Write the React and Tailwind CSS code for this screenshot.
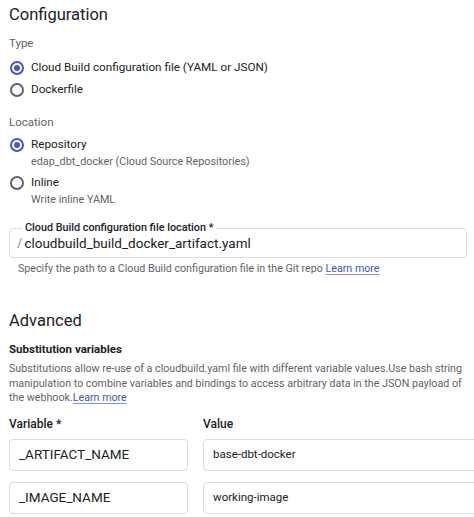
import React from 'react';

const Radio = ({ checked }) => (
  <span
    className={`flex h-[14px] w-[14px] shrink-0 items-center justify-center rounded-full border-2 ${
      checked ? 'border-[#4257d6]' : 'border-[#5f6368]'
    }`}
  >
    {checked && <span className="h-[6px] w-[6px] rounded-full bg-[#4257d6]" />}
  </span>
);

const Option = ({ checked, label, sub }) => (
  <div>
    <div className="flex h-[18px] items-center gap-[7px] pl-[1px]">
      <Radio checked={checked} />
      <span className="text-[11.7px] text-[#202124]">{label}</span>
    </div>
    {sub && <div className="h-[16px] pl-[22px] text-[10.8px] leading-[16px] text-[#5f6368]">{sub}</div>}
  </div>
);

const Box = ({ children, className = '' }) => (
  <div className={`flex h-[32px] items-center rounded-[4px] border border-[#dadce0] px-[9px] text-[#202124] ${className}`}>
    {children}
  </div>
);

const Link = ({ children }) => (
  <span className="text-[#4257c4] underline decoration-[#8a94d8] underline-offset-2">{children}</span>
);

export default function App() {
  return (
    <div className="h-[517px] w-[474px] overflow-hidden bg-white pl-[9px] font-['Roboto',sans-serif]">
      <h2 className="h-[30px] text-[16.5px] leading-[30px] text-[#202124]">Configuration</h2>

      <div className="mt-[5px] h-[16px] text-[11.5px] leading-[16px] text-[#5f6368]">Type</div>
      <div className="mt-[8px] flex flex-col gap-[4px]">
        <Option checked label="Cloud Build configuration file (YAML or JSON)" />
        <Option label="Dockerfile" />
      </div>

      <div className="mt-[15px] h-[16px] text-[11.5px] leading-[16px] text-[#5f6368]">Location</div>
      <div className="mt-[6px] flex flex-col gap-[4px]">
        <Option checked label="Repository" sub="edap_dbt_docker (Cloud Source Repositories)" />
        <Option label="Inline" sub="Write inline YAML" />
      </div>

      <div className="relative mt-[20px] flex h-[30px] w-[458px] items-center rounded-[4px] border border-[#dadce0] pl-[7px]">
        <span className="absolute left-[12px] top-[-8px] bg-white px-[3px] text-[10.8px] font-medium leading-[14px] text-[#202124]">
          Cloud Build configuration file location *
        </span>
        <span className="mr-[2px] text-[13px] text-[#80868b]">/</span>
        <span className="text-[13.5px] text-[#202124]">cloudbuild_build_docker_artifact.yaml</span>
      </div>
      <div className="mt-[4px] h-[14px] pl-[9px] text-[10.7px] leading-[14px] text-[#5f6368]">
        Specify the path to a Cloud Build configuration file in the Git repo <Link>Learn more</Link>
      </div>

      <h2 className="mt-[30px] h-[30px] text-[16.5px] leading-[30px] text-[#202124]">Advanced</h2>

      <div className="mt-[5px] h-[16px] text-[11.5px] font-bold leading-[16px] text-[#202124]">Substitution variables</div>
      <div className="mt-[5px] text-[10.7px] leading-[14.5px] text-[#5f6368]">
        <div className="whitespace-nowrap">Substitutions allow re-use of a cloudbuild.yaml file with different variable values.Use bash string</div>
        <div className="whitespace-nowrap">manipulation to combine variables and bindings to access arbitrary data in the JSON payload of</div>
        <div className="whitespace-nowrap">
          the webhook.<Link>Learn more</Link>
        </div>
      </div>

      <div className="mt-[10px] grid grid-cols-[179px_300px] gap-x-[15px]">
        <div className="h-[16px] text-[12px] font-medium leading-[16px] text-[#202124]">Variable *</div>
        <div className="h-[16px] text-[12px] font-medium leading-[16px] text-[#202124]">Value</div>
      </div>
      <div className="mt-[7px] grid grid-cols-[179px_300px] gap-x-[15px] gap-y-[11px]">
        <Box className="text-[13.5px]">_ARTIFACT_NAME</Box>
        <Box className="text-[11.5px]">base-dbt-docker</Box>
        <Box className="text-[13.5px]">_IMAGE_NAME</Box>
        <Box className="text-[11.5px]">working-image</Box>
      </div>
    </div>
  );
}
